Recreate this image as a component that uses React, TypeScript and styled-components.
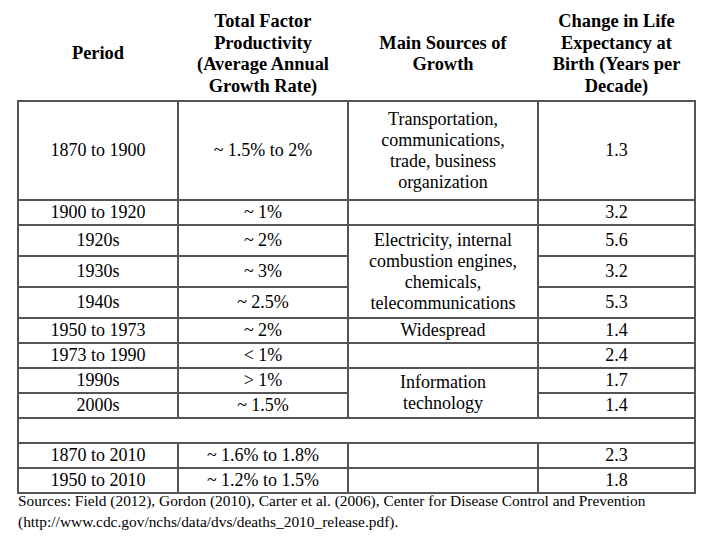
import React from "react";
import styled, { createGlobalStyle } from "styled-components";

const serif = `"Liberation Serif", Tinos, "Times New Roman", "DejaVu Serif", serif`;

const GlobalStyle = createGlobalStyle`
  html, body {
    margin: 0;
    padding: 0;
    background: #fff;
  }
  body {
    font-family: ${serif};
    color: #000;
  }
`;

const Page = styled.div`
  width: 708px;
  padding: 8px 0 0 17px;
  box-sizing: border-box;
  font-family: ${serif};
`;

const Table = styled.table`
  border-collapse: collapse;
  table-layout: fixed;
  width: 677px;
  font-family: ${serif};
  font-size: 18px;
  line-height: 21px;
  color: #000;
`;

const HeadCell = styled.th`
  height: 92px;
  padding: 0 2px;
  font-family: ${serif};
  font-weight: bold;
  font-size: 18.4px;
  line-height: 21.5px;
  text-align: center;
  vertical-align: middle;
  color: #000;
`;

const Row = styled.tr<{ $h: number }>`
  height: ${(p) => p.$h}px;
`;

const Cell = styled.td`
  border: 2px solid #555;
  padding: 0 4px;
  font-family: ${serif};
  text-align: center;
  vertical-align: middle;
  font-weight: normal;
`;

const Sources = styled.p`
  margin: -4px 0 0 1px;
  font-family: ${serif};
  font-size: 15.4px;
  line-height: 21px;
  color: #000;
`;

type R = { period: string; tfp: string; source?: { text: React.ReactNode; span: number } | null; life: string; h: number };

const rows: R[] = [
  {
    period: "1870 to 1900",
    tfp: "~ 1.5% to 2%",
    source: {
      text: (
        <>
          Transportation,
          <br />
          communications,
          <br />
          trade, business
          <br />
          organization
        </>
      ),
      span: 1,
    },
    life: "1.3",
    h: 99,
  },
  { period: "1900 to 1920", tfp: "~ 1%", source: { text: "", span: 1 }, life: "3.2", h: 25 },
  {
    period: "1920s",
    tfp: "~ 2%",
    source: {
      text: (
        <>
          Electricity, internal
          <br />
          combustion engines,
          <br />
          chemicals,
          <br />
          telecommunications
        </>
      ),
      span: 3,
    },
    life: "5.6",
    h: 31,
  },
  { period: "1930s", tfp: "~ 3%", source: null, life: "3.2", h: 31 },
  { period: "1940s", tfp: "~ 2.5%", source: null, life: "5.3", h: 31 },
  { period: "1950 to 1973", tfp: "~ 2%", source: { text: "Widespread", span: 1 }, life: "1.4", h: 25 },
  { period: "1973 to 1990", tfp: "< 1%", source: { text: "", span: 1 }, life: "2.4", h: 25 },
  {
    period: "1990s",
    tfp: "> 1%",
    source: {
      text: (
        <>
          Information
          <br />
          technology
        </>
      ),
      span: 2,
    },
    life: "1.7",
    h: 25,
  },
  { period: "2000s", tfp: "~ 1.5%", source: null, life: "1.4", h: 25 },
];

const totals: R[] = [
  { period: "1870 to 2010", tfp: "~ 1.6% to 1.8%", source: { text: "", span: 1 }, life: "2.3", h: 25 },
  { period: "1950 to 2010", tfp: "~ 1.2% to 1.5%", source: { text: "", span: 1 }, life: "1.8", h: 25 },
];

const DataRow = ({ r }: { r: R }) => (
  <Row $h={r.h}>
    <Cell>{r.period}</Cell>
    <Cell>{r.tfp}</Cell>
    {r.source && <Cell rowSpan={r.source.span}>{r.source.text}</Cell>}
    <Cell>{r.life}</Cell>
  </Row>
);

export default function App() {
  return (
    <Page>
      <GlobalStyle />
      <Table>
        <colgroup>
          <col style={{ width: 160 }} />
          <col style={{ width: 170 }} />
          <col style={{ width: 190 }} />
          <col style={{ width: 157 }} />
        </colgroup>
        <thead>
          <tr>
            <HeadCell>Period</HeadCell>
            <HeadCell>
              Total Factor
              <br />
              Productivity
              <br />
              (Average Annual
              <br />
              Growth Rate)
            </HeadCell>
            <HeadCell>
              Main Sources of
              <br />
              Growth
            </HeadCell>
            <HeadCell>
              Change in Life
              <br />
              Expectancy at
              <br />
              Birth (Years per
              <br />
              Decade)
            </HeadCell>
          </tr>
        </thead>
        <tbody>
          {rows.map((r) => (
            <DataRow key={r.period} r={r} />
          ))}
          <Row $h={25}>
            <Cell colSpan={4} />
          </Row>
          {totals.map((r) => (
            <DataRow key={r.period} r={r} />
          ))}
        </tbody>
      </Table>
      <Sources>
        Sources: Field (2012), Gordon (2010), Carter et al. (2006), Center for Disease Control and Prevention
        <br />
        (http://www.cdc.gov/nchs/data/dvs/deaths_2010_release.pdf).
      </Sources>
    </Page>
  );
}
